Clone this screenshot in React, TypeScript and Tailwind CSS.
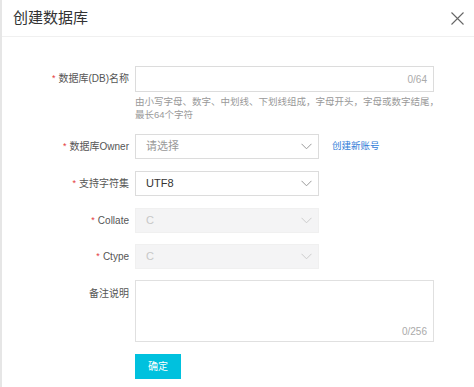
import React from 'react';

const font = { fontFamily: '"Liberation Sans", "Noto Sans CJK SC", sans-serif' };

function Chevron({ color = '#888' }: { color?: string }) {
  return (
    <svg width="11" height="7" viewBox="0 0 11 7" fill="none">
      <path d="M0.5 0.8 L5.5 5.8 L10.5 0.8" stroke={color} strokeWidth="1" />
    </svg>
  );
}

function Label({ text, required = true }: { text: string; required?: boolean }) {
  return (
    <div className="w-[128px] shrink-0 h-[25px] flex items-center justify-end pr-[1px] text-[10px] text-[#555]">
      {required && <span className="text-[#e4393c] mr-[3px] text-[9px]">*</span>}
      <span>{text}</span>
    </div>
  );
}

function Select({ value, placeholder, disabled }: { value: string; placeholder?: boolean; disabled?: boolean }) {
  return (
    <div
      className={`w-[184px] h-[25px] border flex items-center justify-between pl-[10px] pr-[6px] ${
        disabled ? 'bg-[#f4f4f5] border-[#f0f0f0]' : 'bg-white border-[#dcdcdc]'
      }`}
    >
      <span
        className={`text-[11px] ${
          disabled ? 'text-[#c8c8c8]' : placeholder ? 'text-[#999]' : 'text-[#333]'
        }`}
      >
        {value}
      </span>
      <Chevron color={disabled ? '#ccc' : '#999'} />
    </div>
  );
}

export default function App() {
  return (
    <div className="w-[474px] h-[387px] bg-white border-l-2 border-[#e6e6e6] overflow-hidden" style={font}>
      {/* header */}
      <div className="h-[37px] border-b border-[#f0f0f0] flex items-center justify-between pl-[11px] pr-[10px]">
        <span className="text-[15px] text-[#333]">创建数据库</span>
        <svg width="13" height="13" viewBox="0 0 13 13" fill="none">
          <path d="M0.5 0.5 L12.5 12.5 M12.5 0.5 L0.5 12.5" stroke="#666" strokeWidth="1.1" />
        </svg>
      </div>

      <div className="pt-[29px] flex flex-col">
        {/* name */}
        <div className="flex gap-[5px]">
          <Label text="数据库(DB)名称" />
          <div className="flex flex-col">
            <div className="w-[299px] h-[26px] border border-[#dcdcdc] flex items-center justify-end pr-[6px]">
              <span className="text-[10px] text-[#aaa]">0/64</span>
            </div>
            <div className="mt-[4px] text-[9.5px] leading-[12.5px] text-[#999] w-[299px] whitespace-nowrap">
              <div>由小写字母、数字、中划线、下划线组成，字母开头，字母或数字结尾，</div>
              <div>最长64个字符</div>
            </div>
          </div>
        </div>

        {/* owner */}
        <div className="flex gap-[5px] mt-[13px] items-center">
          <Label text="数据库Owner" />
          <Select value="请选择" placeholder />
          <span className="ml-[8px] text-[9.5px] text-[#2f7cd8]">创建新账号</span>
        </div>

        <div className="flex gap-[5px] mt-[12px] items-center">
          <Label text="支持字符集" />
          <Select value="UTF8" />
        </div>

        <div className="flex gap-[5px] mt-[12px] items-center">
          <Label text="Collate" />
          <Select value="C" disabled />
        </div>

        <div className="flex gap-[5px] mt-[11px] items-center">
          <Label text="Ctype" />
          <Select value="C" disabled />
        </div>

        {/* remark */}
        <div className="flex gap-[5px] mt-[11px]">
          <div className="w-[128px] shrink-0 pt-[6px] pr-[1px] text-right text-[10px] text-[#555]">备注说明</div>
          <div className="w-[299px] h-[62px] border border-[#e0e0e0] flex items-end justify-end pr-[6px] pb-[2px]">
            <span className="text-[10px] text-[#aaa]">0/256</span>
          </div>
        </div>

        <div className="pl-[133px] mt-[11px]">
          <button className="w-[46px] h-[25px] bg-[#00c1de] text-white text-[10px]">确定</button>
        </div>
      </div>
    </div>
  );
}
